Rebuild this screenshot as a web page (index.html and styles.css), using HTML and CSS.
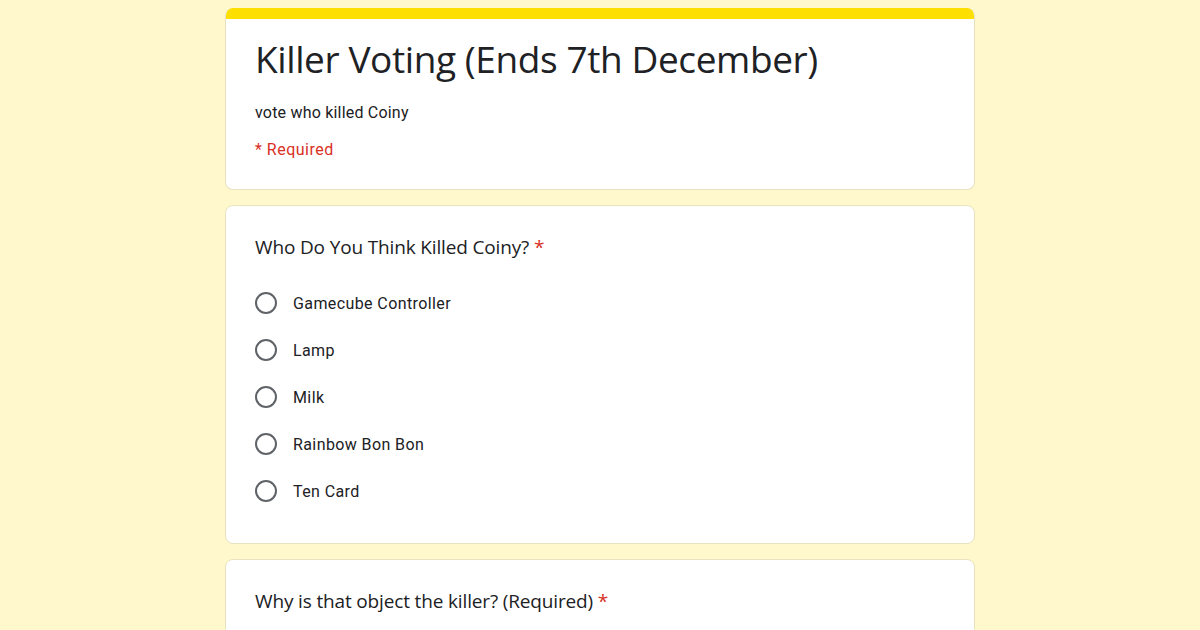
FILE: index.html
```html
<!DOCTYPE html>
<html>
<head>
<meta charset="utf-8">
<link rel="stylesheet" href="styles.css">
</head>
<body>
<div class="page">
  <div class="card header">
    <div class="stripe"></div>
    <div class="header-body">
      <h1 class="title">Killer Voting (Ends 7th December)</h1>
      <div class="desc">vote who killed Coiny</div>
      <div class="req">* Required</div>
    </div>
  </div>
  <div class="card question">
    <div class="qtitle">Who Do You Think Killed Coiny? <span class="star">*</span></div>
    <div class="options">
      <div class="opt"><span class="radio"></span><span class="label">Gamecube Controller</span></div>
      <div class="opt"><span class="radio"></span><span class="label">Lamp</span></div>
      <div class="opt"><span class="radio"></span><span class="label">Milk</span></div>
      <div class="opt"><span class="radio"></span><span class="label">Rainbow Bon Bon</span></div>
      <div class="opt"><span class="radio"></span><span class="label">Ten Card</span></div>
    </div>
  </div>
  <div class="card question">
    <div class="qtitle">Why is that object the killer? (Required) <span class="star">*</span></div>
  </div>
</div>
</body>
</html>
```
FILE: styles.css
```css
html, body {
  margin: 0;
  padding: 0;
  background: #fff8cc;
  height: 630px;
  overflow: hidden;
}
.page {
  width: 750px;
  margin: 0 auto;
  padding-top: 8px;
  display: flex;
  flex-direction: column;
  gap: 15px;
}
.card {
  background: #ffffff;
  border: 1px solid #e8e2c0;
  border-radius: 8px;
  overflow: hidden;
  box-sizing: border-box;
}
.header {
  border-top: none;
}
.stripe {
  height: 11px;
  background: #fde002;
}
.header-body {
  padding: 12px 29px 29px;
}
.title {
  margin: 0;
  font-family: "Open Sans", sans-serif;
  font-weight: 400;
  font-size: 37px;
  line-height: 56px;
  color: #202124;
  letter-spacing: -0.4px;
}
.desc {
  font-family: Roboto, sans-serif;
  font-size: 16px;
  line-height: 20px;
  color: #202124;
  margin-top: 16px;
  letter-spacing: 0.2px;
}
.req {
  font-family: Roboto, sans-serif;
  font-size: 16px;
  line-height: 20px;
  color: #d93025;
  margin-top: 17px;
  letter-spacing: 0.5px;
}
.question {
  padding: 28px 29px 40px;
}
.qtitle {
  font-family: "Open Sans", sans-serif;
  font-size: 19px;
  line-height: 26px;
  color: #202124;
  letter-spacing: -0.15px;
}
.star {
  color: #d93025;
}
.options {
  margin-top: 31px;
  display: flex;
  flex-direction: column;
  gap: 23px;
}
.opt {
  display: flex;
  align-items: center;
  gap: 16px;
  height: 24px;
}
.radio {
  width: 18px;
  height: 18px;
  border: 2px solid #5f6368;
  border-radius: 50%;
  flex: none;
}
.label {
  font-family: Roboto, sans-serif;
  font-size: 16px;
  color: #202124;
  letter-spacing: 0.4px;
}
```
